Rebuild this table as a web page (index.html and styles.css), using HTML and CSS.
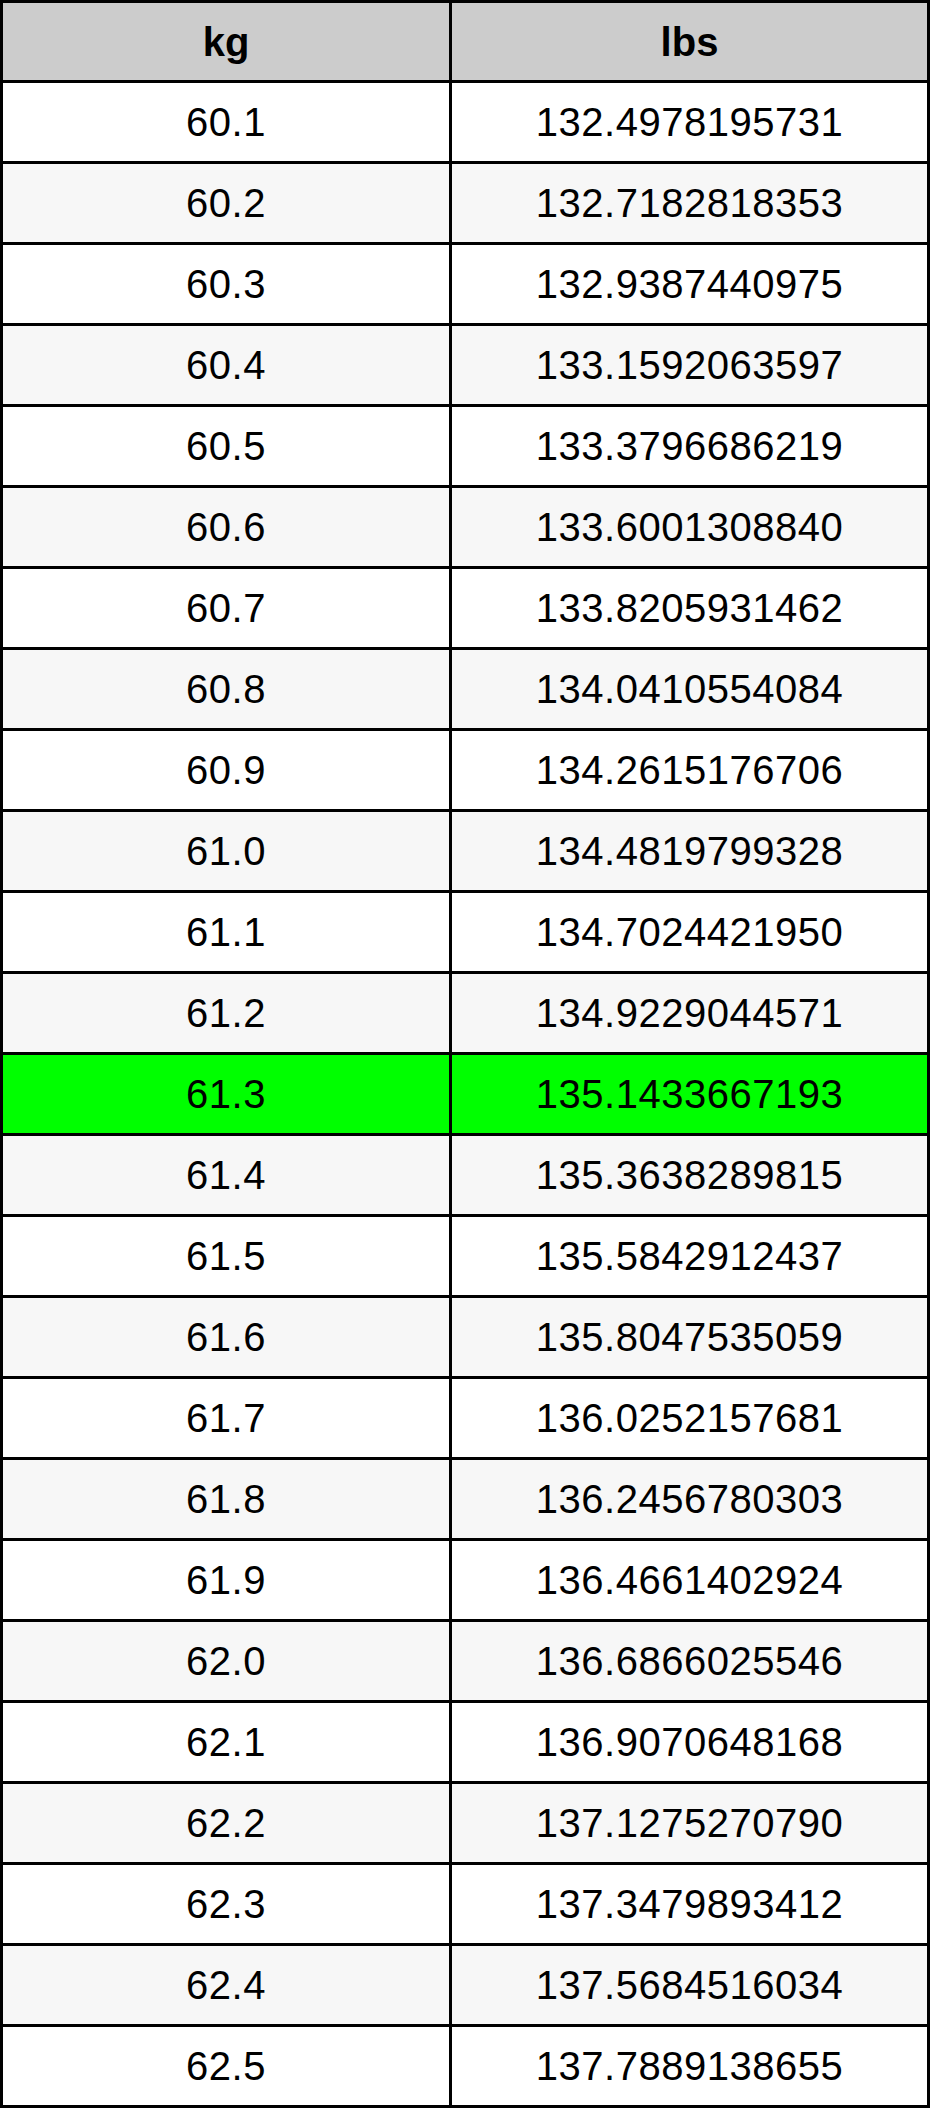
FILE: index.html
```html
<!DOCTYPE html>
<html>
<head>
<meta charset="utf-8">
<title>kg to lbs</title>
<link rel="stylesheet" href="styles.css">
</head>
<body>
<table class="conv">
<thead>
<tr><th class="c1">kg</th><th class="c2">lbs</th></tr>
</thead>
<tbody>
<tr><td>60.1</td><td>132.4978195731</td></tr>
<tr><td>60.2</td><td>132.7182818353</td></tr>
<tr><td>60.3</td><td>132.9387440975</td></tr>
<tr><td>60.4</td><td>133.1592063597</td></tr>
<tr><td>60.5</td><td>133.3796686219</td></tr>
<tr><td>60.6</td><td>133.6001308840</td></tr>
<tr><td>60.7</td><td>133.8205931462</td></tr>
<tr><td>60.8</td><td>134.0410554084</td></tr>
<tr><td>60.9</td><td>134.2615176706</td></tr>
<tr><td>61.0</td><td>134.4819799328</td></tr>
<tr><td>61.1</td><td>134.7024421950</td></tr>
<tr><td>61.2</td><td>134.9229044571</td></tr>
<tr class="hl"><td>61.3</td><td>135.1433667193</td></tr>
<tr><td>61.4</td><td>135.3638289815</td></tr>
<tr><td>61.5</td><td>135.5842912437</td></tr>
<tr><td>61.6</td><td>135.8047535059</td></tr>
<tr><td>61.7</td><td>136.0252157681</td></tr>
<tr><td>61.8</td><td>136.2456780303</td></tr>
<tr><td>61.9</td><td>136.4661402924</td></tr>
<tr><td>62.0</td><td>136.6866025546</td></tr>
<tr><td>62.1</td><td>136.9070648168</td></tr>
<tr><td>62.2</td><td>137.1275270790</td></tr>
<tr><td>62.3</td><td>137.3479893412</td></tr>
<tr><td>62.4</td><td>137.5684516034</td></tr>
<tr><td>62.5</td><td>137.7889138655</td></tr>
</tbody>
</table>
</body>
</html>
```

FILE: styles.css
```css
html, body {
  margin: 0;
  padding: 0;
  background: #ffffff;
}

.conv {
  width: 930px;
  border-collapse: separate;
  border-spacing: 0;
  border-top: 3px solid #000;
  border-left: 3px solid #000;
  font-family: "Liberation Sans", Arial, sans-serif;
  font-size: 40px;
  color: #000;
  table-layout: fixed;
}

.conv th,
.conv td {
  padding: 0;
  text-align: center;
  vertical-align: middle;
  border-right: 3px solid #000;
  border-bottom: 3px solid #000;
  line-height: 1;
}

.conv th {
  background: #cccccc;
  font-weight: bold;
  height: 77px;
}

.conv .c1 {
  width: 446px;
}

.conv .c2 {
  width: 475px;
}

.conv td {
  height: 78px;
  background: #ffffff;
  letter-spacing: 0.5px;
}

.conv tbody tr:nth-child(even) td {
  background: #f7f7f7;
}

.conv tbody tr.hl td {
  background: #00ff00;
}
```
